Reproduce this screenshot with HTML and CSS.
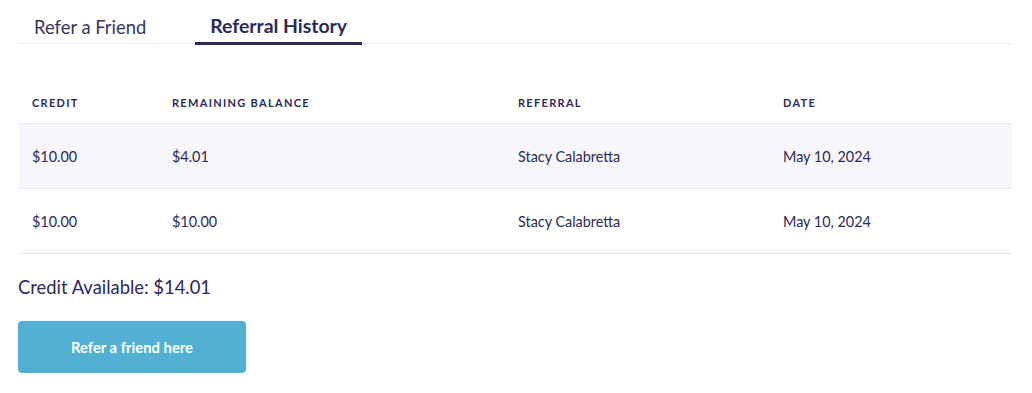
FILE: index.html
```html
<!DOCTYPE html>
<html lang="en">
<head>
    <meta charset="UTF-8">
    <meta name="viewport" content="width=device-width, initial-scale=1.0">
    <title>Referral History</title>
    <link rel="stylesheet" href="styles.css">
</head>
<body>
    <div class="tabs">
        <a href="#" class="tab">Refer a Friend</a>
        <a href="#" class="tab active">Referral History</a>
    </div>

    <table class="history">
        <thead>
            <tr>
                <th class="col-credit">Credit</th>
                <th class="col-balance">Remaining Balance</th>
                <th class="col-referral">Referral</th>
                <th>Date</th>
            </tr>
        </thead>
        <tbody>
            <tr>
                <td>$10.00</td>
                <td>$4.01</td>
                <td>Stacy Calabretta</td>
                <td>May 10, 2024</td>
            </tr>
            <tr>
                <td>$10.00</td>
                <td>$10.00</td>
                <td>Stacy Calabretta</td>
                <td>May 10, 2024</td>
            </tr>
        </tbody>
    </table>

    <p class="credit">Credit Available: $14.01</p>
    <button class="refer-btn">Refer a friend here</button>
</body>
</html>
```

FILE: styles.css
```css
body {
    font-family: Lato, 'Noto Sans', sans-serif;
    margin: 0;
    padding: 0 20px 0 18px;
    background: #fff;
    color: #2c2a58;
}
.tabs {
    display: flex;
    border-bottom: 1px solid #ececf3;
    height: 43px;
}
.tab {
    display: block;
    font-size: 18.4px;
    color: #37365a;
    text-decoration: none;
    padding: 16px 16px 0 16px;
    margin-right: 33px;
    box-sizing: border-box;
    height: 45px;
}
.tab.active {
    font-size: 19.4px;
    font-weight: 700;
    color: #2c2a58;
    padding: 14px 15px 0 15px;
    border-bottom: 3px solid #2c2a58;
}
.history {
    width: 100%;
    border-collapse: collapse;
    margin-top: 37px;
}
.history th {
    text-align: left;
    font-size: 11px;
    font-weight: 700;
    letter-spacing: 1.3px;
    text-transform: uppercase;
    color: #2c2a58;
    padding: 0 14px;
    height: 42px;
    border-bottom: 1px solid #e8e8f0;
}
.col-credit { width: 112px; }
.col-balance { width: 318px; }
.col-referral { width: 237px; }
.history td {
    font-size: 14.4px;
    color: #2c2a58;
    padding: 0 14px;
    height: 64px;
    border-bottom: 1px solid #e8e8f0;
}
.history tbody tr:nth-child(odd) {
    background: #f7f7fb;
}
.credit {
    font-size: 18.4px;
    margin: 22px 0 0 0;
    color: #2c2a58;
}
.refer-btn {
    margin-top: 23px;
    width: 228px;
    height: 52px;
    background: #52b1d2;
    color: #fff;
    border: none;
    border-radius: 4px;
    font-family: Lato, 'Noto Sans', sans-serif;
    font-size: 14.8px;
    font-weight: 700;
    cursor: pointer;
}
```
